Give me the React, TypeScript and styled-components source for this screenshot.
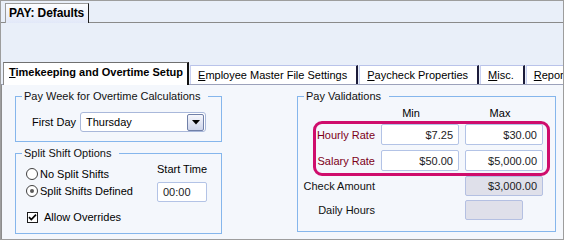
import React from 'react';
import styled, { createGlobalStyle } from 'styled-components';

const GlobalStyle = createGlobalStyle`
  *, *::before, *::after { box-sizing: border-box; }
  html, body { margin: 0; padding: 0; background: #f2f2f2; }
  body {
    font-family: 'Liberation Sans', Arial, sans-serif;
    font-size: 11px;
    color: #000;
  }
`;

const Frame = styled.div`
  width: 564px;
  height: 240px;
  border: 1px solid #9d9d9d;
  background: #e9eff9;
  display: flex;
  flex-direction: column;
  overflow: hidden;
`;

const DocTabs = styled.div`
  flex: none;
  height: 22px;
  border-bottom: 1px solid #8a8a8a;
  display: flex;
  align-items: flex-end;
  padding-left: 4px;
`;

const DocTab = styled.div`
  position: relative;
  height: 20px;
  margin-bottom: -1px;
  padding: 0 4px 0 3px;
  border: 1px solid #9a9a9a;
  border-right-color: #1e1e1e;
  border-bottom: none;
  background: linear-gradient(#fcfdff, #e2e8f8);
  font-size: 12px;
  font-weight: bold;
  line-height: 19px;
  letter-spacing: -0.1px;
`;

const Band = styled.div`
  flex: none;
  height: 39px;
`;

const TabStrip = styled.div`
  flex: none;
  height: 22px;
  display: flex;
  align-items: flex-end;
  padding-left: 2px;
  white-space: nowrap;
`;

const Tab = styled.div<{ $active?: boolean }>`
  flex: none;
  background: #fff;
  margin-left: ${p => (p.$active ? 0 : 1)}px;
  height: ${p => (p.$active ? 23 : 19)}px;
  margin-bottom: ${p => (p.$active ? -1 : 0)}px;
  line-height: 18px;
  padding: ${p => (p.$active ? '0 4px 0 5px' : '0 9px 0 7px')};
  border-top: 1px solid ${p => (p.$active ? '#707070' : '#b9c3ea')};
  border-left: 1px solid ${p => (p.$active ? '#8a8a8a' : '#c8d0f0')};
  border-right: 2px solid ${p => (p.$active ? '#111' : '#1c1c3a')};
  font-weight: ${p => (p.$active ? 'bold' : 'normal')};
  position: relative;
  z-index: ${p => (p.$active ? 1 : 0)};
`;

const Page = styled.div`
  flex: 1;
  border-top: 1px solid #9ca2bb;
  border-left: 1px solid #8c8c8c;
  background: #f4f7fc;
  display: flex;
  align-items: flex-start;
  gap: 75px;
  padding: 4px 0 0 13px;
`;

const LeftColumn = styled.div`
  width: 207px;
  display: flex;
  flex-direction: column;
  gap: 4px;
`;

const Group = styled.fieldset<{ $width?: number }>`
  margin: 0;
  padding: 0;
  min-inline-size: 0;
  width: ${p => (p.$width ? `${p.$width}px` : 'auto')};
  border: 1px solid #85b6ec;
`;

const Caption = styled.legend`
  margin-left: 6px;
  padding: 0 8px 0 2px;
  line-height: 14px;
  color: #111;
`;

const DayRow = styled.div`
  display: flex;
  align-items: center;
  justify-content: space-between;
  padding: 9px 15px 9px 16px;
`;

const Select = styled.div`
  width: 126px;
  height: 20px;
  border: 1px solid #a9b8da;
  border-radius: 3px;
  background: #fff;
  display: flex;
  align-items: center;
  justify-content: space-between;
  padding: 0 1px 0 5px;
`;

const DropButton = styled.div`
  width: 17px;
  height: 17px;
  border: 1px solid #7080a8;
  border-radius: 2px;
  background: linear-gradient(#f6f7fc, #cdd4ea);
  display: flex;
  align-items: center;
  justify-content: center;
`;

const SplitBody = styled.div`
  display: flex;
  justify-content: space-between;
  padding: 0 14px 8px 10px;
`;

const OptionList = styled.div`
  display: flex;
  flex-direction: column;
  gap: 1px;
  padding-top: 6px;
`;

const Option = styled.div<{ $spaced?: boolean }>`
  height: 16px;
  display: flex;
  align-items: center;
  margin-top: ${p => (p.$spaced ? 9 : 0)}px;
`;

const RadioMark = styled.span<{ $on?: boolean }>`
  flex: none;
  width: 12px;
  height: 12px;
  margin-right: 2px;
  border-radius: 50%;
  border: 1px solid #404040;
  background: #fff;
  display: flex;
  align-items: center;
  justify-content: center;
  &::after {
    content: '';
    width: 4px;
    height: 4px;
    border-radius: 50%;
    background: ${p => (p.$on ? '#5a5a5a' : 'transparent')};
  }
`;

const CheckMark = styled.span`
  flex: none;
  width: 11px;
  height: 11px;
  margin: 0 6px 0 1px;
  border: 1px solid #1c1c1c;
  background: #fff;
  display: flex;
  align-items: center;
  justify-content: center;
`;

const StartColumn = styled.div`
  width: 50px;
  padding-top: 2px;
  display: flex;
  flex-direction: column;
  gap: 6px;
`;

const FieldLabel = styled.div`
  line-height: 14px;
  white-space: nowrap;
`;

const TextBox = styled.div<{ $align?: 'left' | 'right'; $grey?: boolean; $width?: number }>`
  width: ${p => (p.$width ? `${p.$width}px` : '100%')};
  height: ${p => (p.$grey ? 20 : 21)}px;
  border: 1px solid ${p => (p.$grey ? '#b4c0e2' : '#b3c3e6')};
  border-radius: 2px;
  background: ${p => (p.$grey ? '#dfe0ea' : '#fff')};
  display: flex;
  align-items: center;
  justify-content: ${p => (p.$align === 'left' ? 'flex-start' : 'flex-end')};
  padding: 0 5px 0 5px;
  color: #1b1b24;
  white-space: nowrap;
`;

const TimeBox = styled(TextBox)`
  height: 20px;
`;

const ValBody = styled.div`
  padding: 3px 0 11px 0;
`;

const Grid = styled.div`
  display: grid;
  grid-template-columns: 1fr 78px 78px;
  column-gap: 6px;
  row-gap: 4px;
  align-items: center;
  margin-right: 12px;
`;

const HeadCell = styled.div<{ $shift?: number }>`
  line-height: 14px;
  text-align: center;
  padding-right: ${p => p.$shift ?? 0}px;
`;

const Highlight = styled.div`
  margin: 1px 5px 0 15px;
  border: 3px solid #cf0d6c;
  border-radius: 9px;
  padding: 0 4px 2px 0;
  display: grid;
  grid-template-columns: 1fr 78px 78px;
  column-gap: 6px;
  row-gap: 5px;
  align-items: center;
`;

const RowLabel = styled.div<{ $accent?: boolean }>`
  text-align: right;
  white-space: nowrap;
  color: ${p => (p.$accent ? '#7d0018' : '#111')};
`;

const Arrow = () => (
  <svg width="8" height="5" viewBox="0 0 8 5">
    <path d="M0 0H8L4 4.5Z" fill="#000" />
  </svg>
);

const Tick = () => (
  <svg width="9" height="9" viewBox="0 0 9 9">
    <path d="M1 4.2L3.3 6.6L8 1.6" fill="none" stroke="#000" strokeWidth="1.7" />
  </svg>
);

const rates = [
  { label: 'Hourly Rate', min: '$7.25', max: '$30.00' },
  { label: 'Salary Rate', min: '$50.00', max: '$5,000.00' },
];

export default function App() {
  return (
    <>
      <GlobalStyle />
      <Frame>
        <DocTabs>
          <DocTab>PAY: Defaults</DocTab>
        </DocTabs>
        <Band />
        <TabStrip>
          <Tab $active>
            <u>T</u>imekeeping and Overtime Setup
          </Tab>
          <Tab>
            <u>E</u>mployee Master File Settings
          </Tab>
          <Tab>
            <u>P</u>aycheck Properties
          </Tab>
          <Tab>
            <u>M</u>isc.
          </Tab>
          <Tab>
            <u>R</u>eport
          </Tab>
        </TabStrip>
        <Page>
          <LeftColumn>
            <Group>
              <Caption>Pay Week for Overtime Calculations</Caption>
              <DayRow>
                <FieldLabel>First Day</FieldLabel>
                <Select>
                  <span>Thursday</span>
                  <DropButton>
                    <Arrow />
                  </DropButton>
                </Select>
              </DayRow>
            </Group>
            <Group>
              <Caption>Split Shift Options</Caption>
              <SplitBody>
                <OptionList>
                  <Option>
                    <RadioMark />
                    No Split Shifts
                  </Option>
                  <Option>
                    <RadioMark $on />
                    Split Shifts Defined
                  </Option>
                  <Option $spaced>
                    <CheckMark>
                      <Tick />
                    </CheckMark>
                    Allow Overrides
                  </Option>
                </OptionList>
                <StartColumn>
                  <FieldLabel>Start Time</FieldLabel>
                  <TimeBox $align="left">00:00</TimeBox>
                </StartColumn>
              </SplitBody>
            </Group>
          </LeftColumn>
          <Group $width={259}>
            <Caption>Pay Validations</Caption>
            <ValBody>
              <Grid>
                <span />
                <HeadCell $shift={18}>Min</HeadCell>
                <HeadCell $shift={8}>Max</HeadCell>
              </Grid>
              <Highlight>
                {rates.map(r => (
                  <React.Fragment key={r.label}>
                    <RowLabel $accent>{r.label}</RowLabel>
                    <TextBox>{r.min}</TextBox>
                    <TextBox>{r.max}</TextBox>
                  </React.Fragment>
                ))}
              </Highlight>
              <Grid>
                <RowLabel>Check Amount</RowLabel>
                <span />
                <TextBox $grey>$3,000.00</TextBox>
                <RowLabel>Daily Hours</RowLabel>
                <span />
                <TextBox $grey $width={58} />
              </Grid>
            </ValBody>
          </Group>
        </Page>
      </Frame>
    </>
  );
}
